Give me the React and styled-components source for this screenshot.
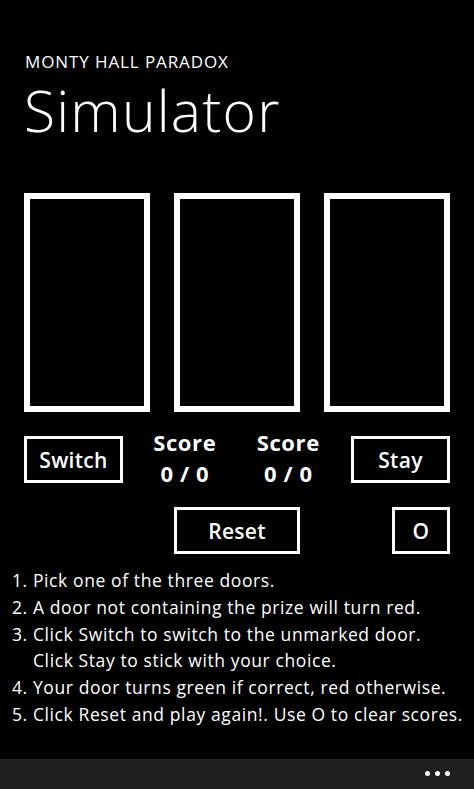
import React from "react";
import styled, { createGlobalStyle } from "styled-components";

const Global = createGlobalStyle`
  html, body {
    margin: 0;
    padding: 0;
    background: #000;
  }
  body {
    font-family: "Open Sans", "Noto Sans", sans-serif;
    color: #fff;
  }
`;

const Screen = styled.div`
  width: 474px;
  height: 789px;
  background: #000;
  display: flex;
  flex-direction: column;
  overflow: hidden;
`;

const Header = styled.header`
  padding: 52px 0 0 25px;
  display: flex;
  flex-direction: column;
`;

const AppName = styled.div`
  font-size: 17px;
  font-weight: 400;
  letter-spacing: 0.9px;
  line-height: 20px;
`;

const PageTitle = styled.h1`
  margin: 4px 0 0 -1px;
  font-size: 57px;
  font-weight: 300;
  line-height: 68px;
  letter-spacing: 1.2px;
`;

const Body = styled.main`
  flex: 1;
  padding: 0 24px;
  display: flex;
  flex-direction: column;
`;

const Doors = styled.div`
  margin-top: 49px;
  display: grid;
  grid-template-columns: repeat(3, 126px);
  column-gap: 24px;
`;

const Door = styled.div`
  height: 219px;
  box-sizing: border-box;
  border: 6px solid #fff;
  background: ${(p) => p.$fill || "#000"};
`;

const ControlRow = styled.div`
  margin-top: 24px;
  height: 47px;
  display: grid;
  grid-template-columns: 99px 1fr 1fr 99px;
  align-items: start;
`;

const ScorePair = styled.div`
  grid-column: 2 / 4;
  display: grid;
  grid-template-columns: 1fr 1fr;
  padding: 0 11px 0 10px;
`;

const Score = styled.div`
  display: flex;
  flex-direction: column;
  align-items: center;
  font-size: 22px;
  font-weight: 700;
  line-height: 31px;
  letter-spacing: 0.6px;
  margin-top: -9px;
`;

const ActionRow = styled.div`
  margin-top: 24px;
  display: grid;
  grid-template-columns: repeat(3, 126px);
  column-gap: 24px;
`;

const Button = styled.button`
  grid-column: ${(p) => p.$col || "auto"};
  justify-self: ${(p) => p.$align || "stretch"};
  width: ${(p) => p.$w || "auto"};
  height: 47px;
  box-sizing: border-box;
  border: 3px solid #fff;
  background: transparent;
  color: #fff;
  font-family: "Open Sans", "Noto Sans", sans-serif;
  font-size: 21px;
  font-weight: 600;
  letter-spacing: 0.3px;
  padding: 0;
  cursor: pointer;
`;

const Steps = styled.ol`
  list-style: none;
  margin: 13px 0 0 -12px;
  padding: 0;
  font-size: 17.5px;
  letter-spacing: 0.6px;
  line-height: 26.8px;
  white-space: nowrap;
`;

const Step = styled.li`
  padding-left: ${(p) => (p.$cont ? "21px" : "0")};
`;

const AppBar = styled.footer`
  height: 30px;
  background: #1f1f1f;
  display: flex;
  justify-content: flex-end;
  align-items: flex-start;
  padding-right: 24px;
`;

const More = styled.div`
  display: flex;
  gap: 5px;
  margin-top: 12px;
`;

const Dot = styled.span`
  width: 5px;
  height: 5px;
  border-radius: 50%;
  background: #fff;
`;

export default function App() {
  return (
    <>
      <Global />
      <Screen>
        <Header>
          <AppName>MONTY HALL PARADOX</AppName>
          <PageTitle>Simulator</PageTitle>
        </Header>
        <Body>
          <Doors>
            <Door />
            <Door />
            <Door />
          </Doors>
          <ControlRow>
            <Button>Switch</Button>
            <ScorePair>
              <Score>
                <span>Score</span>
                <span>0 / 0</span>
              </Score>
              <Score>
                <span>Score</span>
                <span>0 / 0</span>
              </Score>
            </ScorePair>
            <Button>Stay</Button>
          </ControlRow>
          <ActionRow>
            <Button $col="2">Reset</Button>
            <Button $col="3" $align="end" $w="58px">O</Button>
          </ActionRow>
          <Steps>
            <Step>1. Pick one of the three doors.</Step>
            <Step>2. A door not containing the prize will turn red.</Step>
            <Step>3. Click Switch to switch to the unmarked door.</Step>
            <Step $cont>Click Stay to stick with your choice.</Step>
            <Step>4. Your door turns green if correct, red otherwise.</Step>
            <Step>5. Click Reset and play again!. Use O to clear scores.</Step>
          </Steps>
        </Body>
        <AppBar>
          <More>
            <Dot />
            <Dot />
            <Dot />
          </More>
        </AppBar>
      </Screen>
    </>
  );
}
